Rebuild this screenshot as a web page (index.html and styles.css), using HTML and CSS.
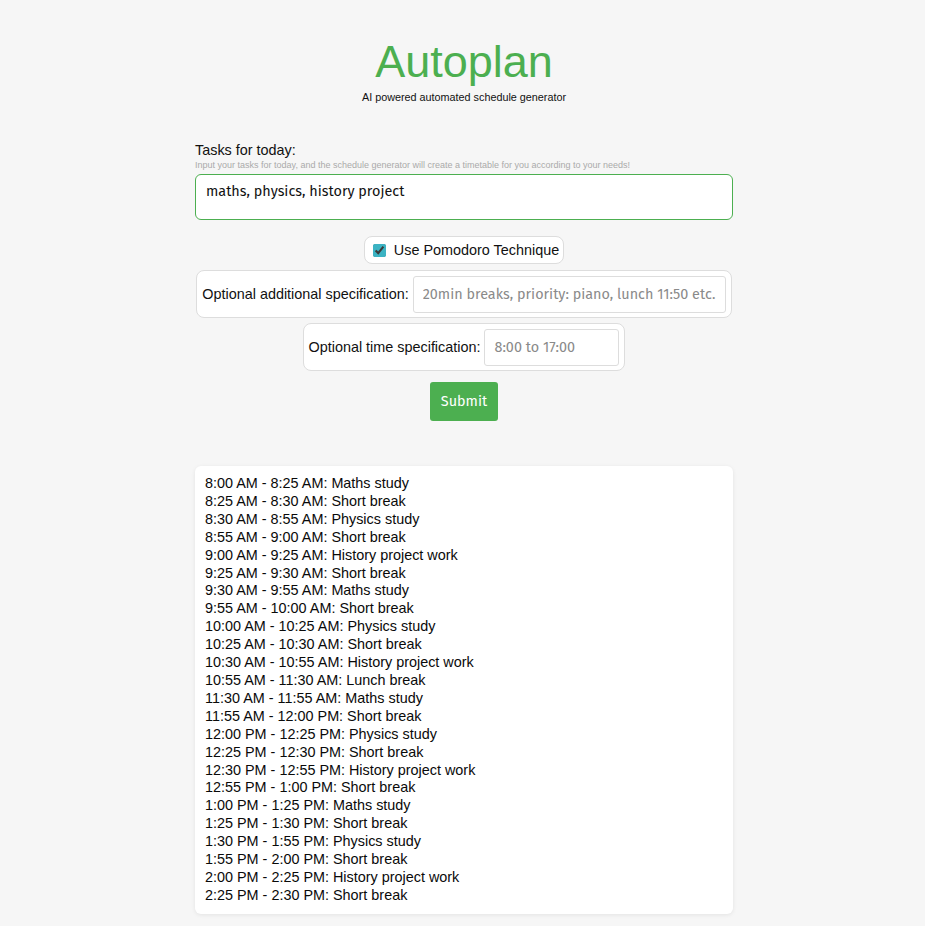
FILE: index.html
```html
<!DOCTYPE html>
<html>
<head>
<meta charset="utf-8">
<link rel="stylesheet" href="styles.css">
</head>
<body>
<div class="page">
  <header class="header">
    <h1 class="title">Autoplan</h1>
    <p class="subtitle">AI powered automated schedule generator</p>
  </header>
  <form class="form">
    <label class="tasks-label">Tasks for today:</label>
    <p class="hint">Input your tasks for today, and the schedule generator will create a timetable for you according to your needs!</p>
    <textarea class="tasks">maths, physics, history project</textarea>
    <div class="options">
      <label class="pill check-pill"><input type="checkbox" class="check" checked><span>Use Pomodoro Technique</span></label>
      <div class="pill field-pill"><span>Optional additional specification:</span><input class="field field-wide" placeholder="20min breaks, priority: piano, lunch 11:50 etc."></div>
      <div class="pill field-pill"><span>Optional time specification:</span><input class="field field-narrow" placeholder="8:00 to 17:00"></div>
      <button type="button" class="submit">Submit</button>
    </div>
  </form>
  <div class="output">
    <div>8:00 AM - 8:25 AM: Maths study</div>
    <div>8:25 AM - 8:30 AM: Short break</div>
    <div>8:30 AM - 8:55 AM: Physics study</div>
    <div>8:55 AM - 9:00 AM: Short break</div>
    <div>9:00 AM - 9:25 AM: History project work</div>
    <div>9:25 AM - 9:30 AM: Short break</div>
    <div>9:30 AM - 9:55 AM: Maths study</div>
    <div>9:55 AM - 10:00 AM: Short break</div>
    <div>10:00 AM - 10:25 AM: Physics study</div>
    <div>10:25 AM - 10:30 AM: Short break</div>
    <div>10:30 AM - 10:55 AM: History project work</div>
    <div>10:55 AM - 11:30 AM: Lunch break</div>
    <div>11:30 AM - 11:55 AM: Maths study</div>
    <div>11:55 AM - 12:00 PM: Short break</div>
    <div>12:00 PM - 12:25 PM: Physics study</div>
    <div>12:25 PM - 12:30 PM: Short break</div>
    <div>12:30 PM - 12:55 PM: History project work</div>
    <div>12:55 PM - 1:00 PM: Short break</div>
    <div>1:00 PM - 1:25 PM: Maths study</div>
    <div>1:25 PM - 1:30 PM: Short break</div>
    <div>1:30 PM - 1:55 PM: Physics study</div>
    <div>1:55 PM - 2:00 PM: Short break</div>
    <div>2:00 PM - 2:25 PM: History project work</div>
    <div>2:25 PM - 2:30 PM: Short break</div>
  </div>
</div>
</body>
</html>
```

FILE: styles.css
```css
html, body {
  margin: 0;
  padding: 0;
  background: #f6f6f6;
  font-family: "Liberation Sans", Arial, sans-serif;
  color: #111;
}

body {
  padding-left: 3px;
}

.page {
  width: 538px;
  margin: 0 auto;
  padding-top: 36px;
  padding-bottom: 20px;
}

.header {
  text-align: center;
}

.title {
  margin: 0;
  font-weight: normal;
  font-size: 45px;
  line-height: 52px;
  color: #4caf50;
}

.subtitle {
  margin: 2px 0 0;
  font-size: 10.8px;
  line-height: 14px;
  color: #111;
}

.form {
  margin-top: 37px;
  display: flex;
  flex-direction: column;
}

.tasks-label {
  font-size: 14.4px;
  line-height: 18px;
}

.hint {
  margin: 0;
  font-size: 9px;
  line-height: 12px;
  color: #aaa;
}

.tasks {
  box-sizing: border-box;
  width: 538px;
  height: 46px;
  margin-top: 3px;
  border: 1px solid #4caf50;
  border-radius: 6px;
  background: #fff;
  padding: 8px 10px;
  font-family: "Fira Sans", "Noto Sans", sans-serif;
  font-size: 14.4px;
  line-height: 18px;
  color: #111;
  resize: none;
  outline: none;
}

.options {
  display: flex;
  flex-direction: column;
  align-items: center;
  margin-top: 16px;
}

.pill {
  box-sizing: border-box;
  display: flex;
  align-items: center;
  background: #fff;
  border: 1px solid #ddd;
  border-radius: 8px;
  font-size: 14.4px;
  white-space: nowrap;
}

.check-pill {
  height: 28px;
  padding: 0 4px 0 8px;
}

.check {
  width: 13px;
  height: 13px;
  margin: 0 8px 0 0;
  accent-color: #3bb3c3;
}

.field-pill {
  margin-top: 6px;
  height: 48px;
  padding: 0 5px 0 5px;
  gap: 4px;
}

.options .field-pill + .field-pill {
  margin-top: 5px;
}

.field {
  box-sizing: border-box;
  height: 37px;
  border: 1px solid #ddd;
  border-radius: 3px;
  background: #fff;
  padding: 0 9px;
  font-family: "Fira Sans", "Noto Sans", sans-serif;
  font-size: 14.4px;
  color: #111;
  outline: none;
}

.field::placeholder {
  color: #8a8a8a;
}

.field-wide {
  width: 313px;
}

.field-narrow {
  width: 135px;
}

.submit {
  margin-top: 11px;
  width: 68px;
  height: 39px;
  border: none;
  border-radius: 3px;
  background: #4caf50;
  color: #fff;
  font-family: "Fira Sans", "Noto Sans", sans-serif;
  font-size: 14.4px;
  font-weight: normal;
  cursor: pointer;
}

.output {
  margin-top: 45px;
  background: #fff;
  border-radius: 6px;
  box-shadow: 0 1px 4px rgba(0, 0, 0, 0.08);
  padding: 9px 10px 9px;
  font-size: 14.4px;
  line-height: 17.9px;
  color: #0a0a0a;
}
```
